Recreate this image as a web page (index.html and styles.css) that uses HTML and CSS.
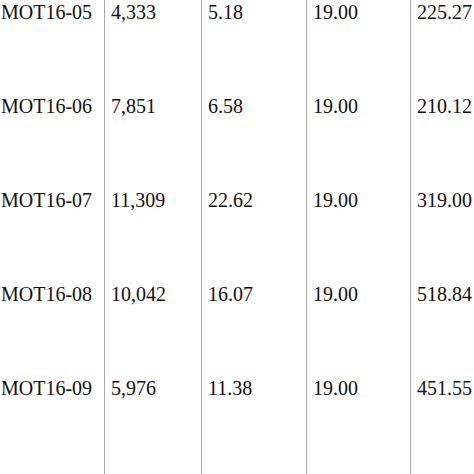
FILE: index.html
```html
<!DOCTYPE html>
<html>
<head>
<meta charset="utf-8">
<link rel="stylesheet" href="styles.css">
</head>
<body>
<div class="table">
  <div class="cell first">MOT16-05</div><div class="cell">4,333</div><div class="cell">5.18</div><div class="cell">19.00</div><div class="cell">225.27</div>
  <div class="cell first">MOT16-06</div><div class="cell">7,851</div><div class="cell">6.58</div><div class="cell">19.00</div><div class="cell">210.12</div>
  <div class="cell first">MOT16-07</div><div class="cell">11,309</div><div class="cell">22.62</div><div class="cell">19.00</div><div class="cell">319.00</div>
  <div class="cell first">MOT16-08</div><div class="cell">10,042</div><div class="cell">16.07</div><div class="cell">19.00</div><div class="cell">518.84</div>
  <div class="cell first">MOT16-09</div><div class="cell">5,976</div><div class="cell">11.38</div><div class="cell">19.00</div><div class="cell">451.55</div>
</div>
</body>
</html>
```
FILE: styles.css
```css
html, body {
  margin: 0;
  padding: 0;
  background: #fff;
  overflow: hidden;
}
.table {
  display: grid;
  grid-template-columns: 104px 97px 105px 104px 64px;
  grid-template-rows: 94px 94px 94px 94px 98px;
  width: 474px;
  height: 474px;
  font-family: "Liberation Serif", "Times New Roman", serif;
  font-size: 20px;
  line-height: 23px;
  color: #111;
}
.cell {
  border-left: 1px solid #a8a8a8;
  padding: 1px 0 0 6px;
  white-space: nowrap;
  overflow: hidden;
}
.cell.first {
  border-left: none;
  padding-left: 1px;
}
```
